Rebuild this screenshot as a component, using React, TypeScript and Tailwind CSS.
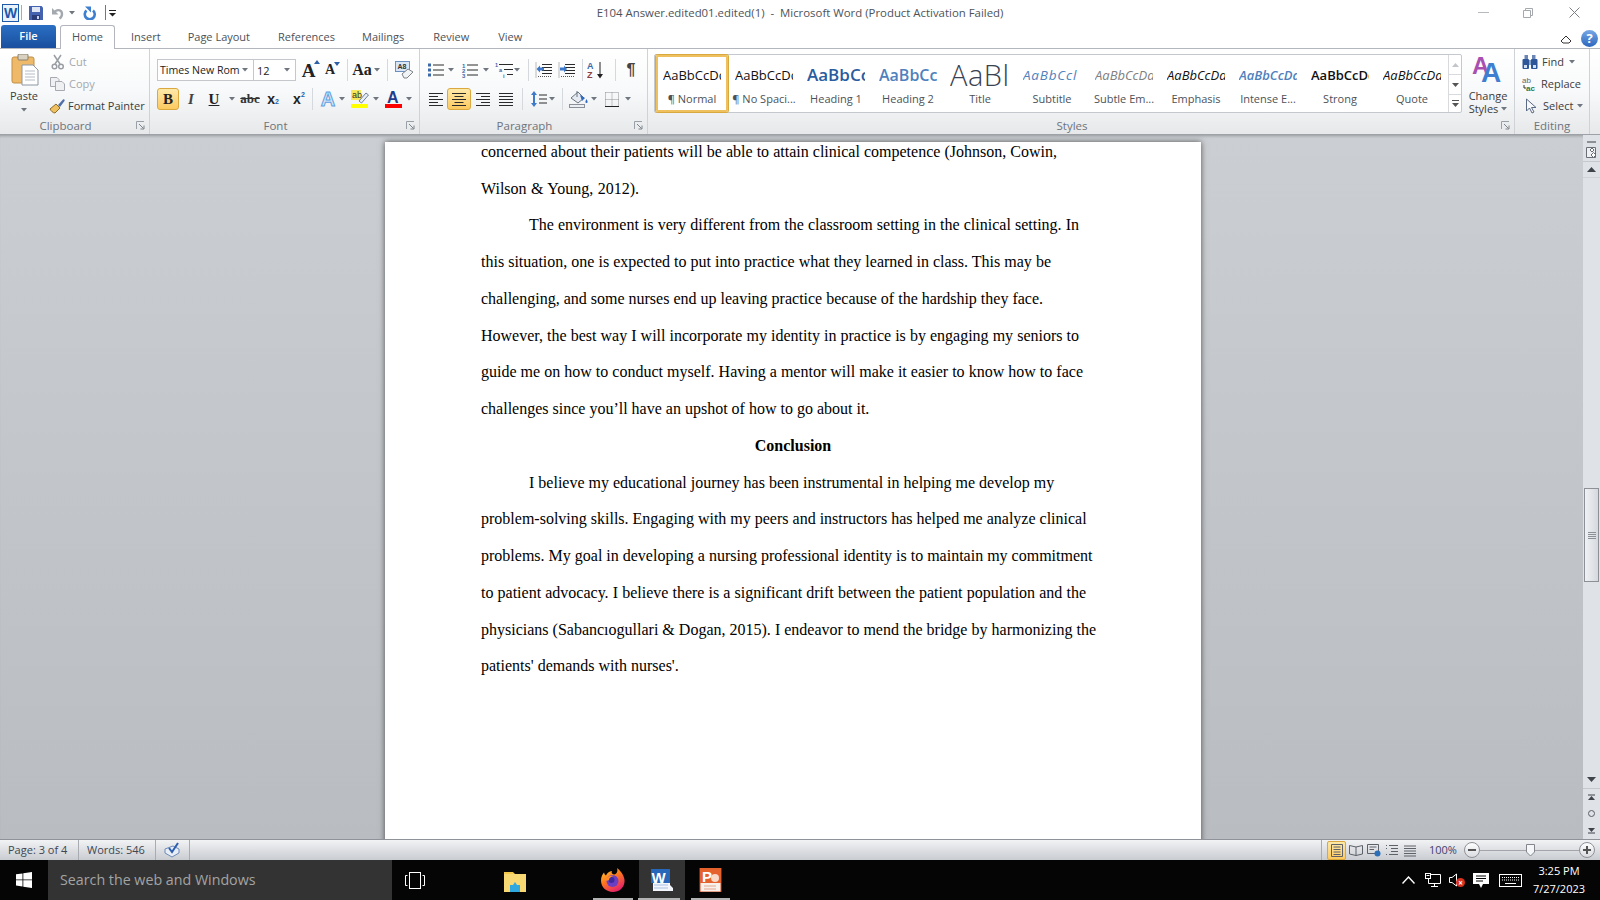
import type { ReactNode } from "react";

/* ── small shared bits ─────────────────── */

function Drop({ className = "" }: { className?: string }) {
    return (
        <svg width="6" height="4" viewBox="0 0 6 4" className={`shrink-0 ${className}`}>
            <path d="M0 0H6L3 3.5Z" fill="#6f7680" />
        </svg>
    );
}

function Sep({ className = "" }: { className?: string }) {
    return <div className={`w-px h-[22px] bg-[#d5d8dc] shrink-0 ${className}`} />;
}

function Launcher() {
    return (
        <div className="w-[18px] flex justify-center shrink-0">
            <svg width="9" height="9" viewBox="0 0 9 9" fill="none">
                <path d="M.5 8V.5H8" stroke="#9aa0a8" />
                <path d="M3 3L7.5 7.5M8 4.5V8H4.5" stroke="#7d838b" />
            </svg>
        </div>
    );
}

function Group({
    label,
    launcher = true,
    className,
    children,
}: {
    label: string;
    launcher?: boolean;
    className: string;
    children: ReactNode;
}) {
    return (
        <div className={`flex flex-col shrink-0 border-r border-[#cfd2d6] ${className}`}>
            <div className="h-[69px]">{children}</div>
            <div className="h-[15px] flex items-center text-[11.5px] text-[#6e747c]">
                <span className="flex-1 text-center">{label}</span>
                {launcher && <Launcher />}
            </div>
        </div>
    );
}

function Lines({ kind }: { kind: "left" | "center" | "right" | "justify" }) {
    const rows: Record<string, string[]> = {
        left: ["M1 2.5H15", "M1 5.5H10", "M1 8.5H15", "M1 11.5H10", "M1 14.5H15"],
        center: ["M1 2.5H15", "M3.5 5.5H12.5", "M1 8.5H15", "M3.5 11.5H12.5", "M1 14.5H15"],
        right: ["M1 2.5H15", "M6 5.5H15", "M1 8.5H15", "M6 11.5H15", "M1 14.5H15"],
        justify: ["M1 2.5H15", "M1 5.5H15", "M1 8.5H15", "M1 11.5H15", "M1 14.5H15"],
    };
    return (
        <svg width="16" height="16" viewBox="0 0 16 16" fill="none" stroke="#2a2a2a">
            {rows[kind].map((d) => (
                <path key={d} d={d} />
            ))}
        </svg>
    );
}

function Bullets({ kind }: { kind: "dot" | "num" | "multi" }) {
    return (
        <svg width="18" height="16" viewBox="0 0 18 16" fill="none">
            {kind === "dot" && (
                <g fill="#3a68a8">
                    <rect x="1" y="1.5" width="3" height="3" />
                    <rect x="1" y="6.5" width="3" height="3" />
                    <rect x="1" y="11.5" width="3" height="3" />
                </g>
            )}
            {kind === "num" && (
                <g fill="#3a68a8" fontSize="6" fontFamily="Liberation Sans" fontWeight="700">
                    <text x="1" y="5.5">1</text>
                    <text x="1" y="10.5">2</text>
                    <text x="1" y="15.5">3</text>
                </g>
            )}
            {kind === "multi" ? (
                <g>
                    <g fill="#3a68a8" fontSize="5.5" fontFamily="Liberation Sans" fontWeight="700">
                        <text x="0" y="5">1</text>
                        <text x="4" y="10">a</text>
                        <text x="8" y="15.5">i</text>
                    </g>
                    <path d="M4 2.5H18M9 7.5H18M12 12.5H18" stroke="#2a2a2a" />
                </g>
            ) : (
                <path d="M6 3H17M6 8H17M6 13H17" stroke="#2a2a2a" />
            )}
        </svg>
    );
}

function Indent({ inc }: { inc?: boolean }) {
    return (
        <svg width="18" height="16" viewBox="0 0 18 16" fill="none">
            <path d="M1 .5V15.5" stroke="#7a7a7a" strokeDasharray="1 1" />
            <path d="M7 2.5H17M7 5.5H17M7 8.5H17M7 11.5H17" stroke="#2a2a2a" />
            <path d="M3 14.5H17" stroke="#555" strokeDasharray="1 1" />
            {inc ? (
                <path d="M2 5.5H6V3.5L9 7L6 10.5V8.5H2Z" fill="#3f79c9" />
            ) : (
                <path d="M9 5.5H5V3.5L1.5 7L5 10.5V8.5H9Z" fill="#3f79c9" />
            )}
        </svg>
    );
}

/* ── title bar ─────────────────── */

function WordIcon() {
    return (
        <svg width="17" height="18" viewBox="0 0 17 18" className="shrink-0">
            <rect x=".5" y=".5" width="16" height="17" fill="#e9f1fb" stroke="#1d5aa8" />
            <text x="2" y="14" fontSize="14" fontWeight="700" fontFamily="Liberation Sans" fill="#1a58aa">W</text>
        </svg>
    );
}

function TitleBar() {
    return (
        <div className="h-[25px] flex items-center relative bg-white shrink-0">
            <div className="ml-[2px]">
                <WordIcon />
            </div>
            <div className="w-px h-[15px] bg-[#a8acb2] ml-[2px]" />
            <svg width="14" height="14" viewBox="0 0 14 14" className="ml-[7px]">
                <path d="M0 0H12.5L14 1.5V14H0Z" fill="#4462b0" />
                <rect x="3" y="1" width="8" height="5" fill="#dfe7f4" />
                <rect x="3" y="9" width="8" height="5" fill="#2b3c78" />
                <rect x="8" y="10" width="2" height="3" fill="#c9d2e8" />
            </svg>
            <svg width="14" height="14" viewBox="0 0 14 14" fill="none" className="ml-[8px]">
                <path d="M3 7C5 3 11 3 11 8C11 10 10 11.5 8.5 12.5" stroke="#a4a9b0" strokeWidth="2.4" />
                <path d="M1 2V8.5H7.5Z" fill="#a4a9b0" />
            </svg>
            <Drop className="ml-[4px]" />
            <svg width="14" height="14" viewBox="0 0 14 14" fill="none" className="ml-[8px]">
                <path d="M10 4.5A5 5 0 1 1 3.5 4.5" stroke="#3f7fd0" strokeWidth="2.6" />
                <path d="M2 .5H8V6.5Z" fill="#3f7fd0" />
            </svg>
            <div className="w-px h-[15px] bg-[#777] ml-[8px]" />
            <svg width="8" height="8" viewBox="0 0 8 8" className="ml-[3px]">
                <path d="M0 1.5H7" stroke="#222" />
                <path d="M0 4H7L3.5 7.5Z" fill="#222" />
            </svg>
            <div className="absolute left-0 right-0 top-[3px] text-center text-[11.4px] text-[#4d5359] leading-[20px]">
                E104 Answer.edited01.edited(1)&nbsp; -&nbsp; Microsoft Word (Product Activation Failed)
            </div>
            <div className="ml-auto flex items-center">
                <div className="w-[11px] h-px bg-[#b6b9bd] mr-[34px]" />
                <svg width="10" height="10" viewBox="0 0 10 10" fill="none" stroke="#a5a8ac" className="mr-[36px]">
                    <path d="M.5 2.5H7.5V9.5H.5ZM2.5 2.5V.5H9.5V7.5H7.5" />
                </svg>
                <svg width="11" height="11" viewBox="0 0 11 11" fill="none" stroke="#7d8186" className="mr-[20px]">
                    <path d="M.5.5L10.5 10.5M10.5.5L.5 10.5" />
                </svg>
            </div>
        </div>
    );
}

/* ── tabs ─────────────────── */

function Tabs() {
    return (
        <div className="h-[24px] flex items-end border-b border-[#b3b7bd] bg-white text-[11px] text-[#4c5258] shrink-0">
            <div className="w-[55px] h-[23px] ml-px rounded-t-[3px] bg-gradient-to-b from-[#2a6fc4] to-[#1a4f9e] text-white flex items-center justify-center font-semibold">
                File
            </div>
            <div className="w-[55px] h-[24px] ml-[4px] -mb-px bg-white border border-b-0 border-[#b3b7bd] rounded-t-[3px] flex items-center justify-center relative">
                Home
            </div>
            <span className="ml-[16px] mb-[3px]">Insert</span>
            <span className="ml-[27px] mb-[3px]">Page Layout</span>
            <span className="ml-[28px] mb-[3px]">References</span>
            <span className="ml-[27px] mb-[3px]">Mailings</span>
            <span className="ml-[29px] mb-[3px]">Review</span>
            <span className="ml-[29px] mb-[3px]">View</span>
            <div className="ml-auto mr-[2px] mb-[1px] flex items-center gap-[9px]">
                <svg width="12" height="10" viewBox="0 0 12 10" fill="none" stroke="#333">
                    <path d="M1 7L6 2L11 7L9 9H3Z" />
                </svg>
                <div className="w-[17px] h-[17px] rounded-full bg-gradient-to-b from-[#78a8e6] to-[#2b66bd] text-white text-[13px] font-bold flex items-center justify-center leading-none">
                    ?
                </div>
            </div>
        </div>
    );
}

/* ── ribbon ─────────────────── */

function Clipboard() {
    return (
        <Group label="Clipboard" className="w-[150px]">
            <div className="flex pt-[5px]">
                <div className="w-[48px] flex flex-col items-center">
                    <svg width="28" height="32" viewBox="0 0 28 32" className="ml-[2px]">
                        <rect x="1" y="3" width="22" height="26" rx="2" fill="#eeb969" stroke="#c08f48" />
                        <rect x="7" y="0" width="10" height="6" rx="1" fill="#d9d2c2" stroke="#8a806c" />
                        <path d="M11 11H22L27 16V31H11Z" fill="#fff" stroke="#8d96a3" />
                        <path d="M14 17H24M14 20H24M14 23H24M14 26H24" stroke="#b5bbc4" />
                    </svg>
                    <span className="text-[11px] text-[#3c3c3c] leading-[14px] mt-[3px]">Paste</span>
                    <Drop className="mt-[5px]" />
                </div>
                <div className="flex flex-col text-[11px] leading-[22px] ml-[1px] -mt-[3px] whitespace-nowrap">
                    <div className="flex items-center h-[22px] text-[#a4a8ad]">
                        <svg width="14" height="16" viewBox="0 0 14 16" fill="none" stroke="#9a9ea4" className="ml-[2px] mr-[4px]">
                            <path d="M3 1L9 10M10 1L4 10" strokeWidth="1.5" />
                            <circle cx="3.5" cy="12.5" r="2.3" strokeWidth="1.5" />
                            <circle cx="10" cy="12.5" r="2.3" strokeWidth="1.5" />
                        </svg>
                        Cut
                    </div>
                    <div className="flex items-center h-[22px] text-[#a4a8ad]">
                        <svg width="15" height="14" viewBox="0 0 15 14" fill="#eef0f2" stroke="#a6aab0" className="ml-[1px] mr-[4px]">
                            <path d="M.5.5H7L9 2.5V9.5H.5Z" />
                            <path d="M5.5 4.5H12L14.5 7V13.5H5.5Z" />
                        </svg>
                        Copy
                    </div>
                    <div className="flex items-center h-[22px] text-[#3c3c3c]">
                        <svg width="17" height="16" viewBox="0 0 17 16" className="mr-[2px]">
                            <path d="M1 11L7 6L11 10L6 15C4 15 2 13 1 11Z" fill="#eec05f" stroke="#8d6d2b" />
                            <path d="M9 7L14 1.5C15 .8 16.2 2 15.5 3L11 9Z" fill="#4f6fa8" />
                        </svg>
                        Format Painter
                    </div>
                </div>
            </div>
        </Group>
    );
}

function Tool({ className, children }: { className: string; children: ReactNode }) {
    return <div className={`h-[22px] flex items-center justify-center shrink-0 ${className}`}>{children}</div>;
}

function BigA({ small, up }: { small?: boolean; up: boolean }) {
    return (
        <span className={`relative font-['Liberation_Serif'] font-bold text-[#222] leading-none ${small ? "text-[14px]" : "text-[19px]"}`}>
            A
            <svg width="6" height="4" viewBox="0 0 6 4" className="absolute -top-[1px] -right-[5px]">
                <path d={up ? "M0 4H6L3 0Z" : "M0 0H6L3 4Z"} fill="#2d5fa6" />
            </svg>
        </span>
    );
}

function Font() {
    const combo = "h-[22px] border border-[#c4c7cc] bg-white flex items-center text-[11px] text-[#222] leading-none shrink-0";
    return (
        <Group label="Font" className="w-[270px]">
            <div className="pt-[10px] pl-[7px] flex flex-col gap-[7px]">
                <div className="flex items-center">
                    <div className={`${combo} w-[97px] pl-[2px] whitespace-nowrap overflow-hidden`}>
                        <span className="flex-1 text-[10.6px]">Times New Rom</span>
                        <Drop className="mr-[5px]" />
                    </div>
                    <div className={`${combo} w-[43px] -ml-px pl-[3px]`}>
                        <span className="flex-1">12</span>
                        <Drop className="mr-[5px]" />
                    </div>
                    <Tool className="w-[25px]">
                        <BigA up />
                    </Tool>
                    <Tool className="w-[18px]">
                        <BigA small up={false} />
                    </Tool>
                    <Sep className="ml-[8px]" />
                    <Tool className="w-[24px] ml-[2px] font-['Liberation_Serif'] font-bold text-[16px] text-[#222]">Aa</Tool>
                    <Drop />
                    <Sep className="ml-[7px]" />
                    <Tool className="w-[32px]">
                        <svg width="19" height="18" viewBox="0 0 19 18">
                            <rect x=".5" y=".5" width="14" height="10" fill="#dbe6f5" stroke="#6b8fbe" />
                            <text x="2.5" y="8" fontSize="7" fontFamily="Liberation Sans" fontWeight="700" fill="#333">A8</text>
                            <path d="M7 13L13 8L18 11L12 17H9Z" fill="#f2f3f5" stroke="#7c828a" />
                        </svg>
                    </Tool>
                </div>
                <div className="flex items-center">
                    <Tool className="w-[22px] rounded-[3px] border border-[#d9a83f] bg-gradient-to-b from-[#fde9a8] to-[#fcc95f] font-['Liberation_Serif'] font-bold text-[15px] text-[#222]">
                        B
                    </Tool>
                    <Tool className="w-[24px] font-['Liberation_Serif'] italic font-bold text-[15px] text-[#444]">I</Tool>
                    <Tool className="w-[22px] font-['Liberation_Serif'] font-bold text-[15px] text-[#222] underline">U</Tool>
                    <Tool className="w-[14px]">
                        <Drop />
                    </Tool>
                    <Tool className="w-[22px] font-['Liberation_Serif'] font-bold text-[13px] text-[#333] line-through">abc</Tool>
                    <Tool className="w-[24px]">
                        <span className="font-['Liberation_Sans'] font-bold text-[14px] text-[#222] leading-none">
                            x<span className="text-[7px] text-[#2d5fa6]">2</span>
                        </span>
                    </Tool>
                    <Tool className="w-[24px]">
                        <span className="font-['Liberation_Sans'] font-bold text-[14px] text-[#222] leading-none relative">
                            x<span className="text-[7px] text-[#2d5fa6] absolute -top-[1px]">2</span>
                        </span>
                    </Tool>
                    <Sep className="ml-[3px]" />
                    <Tool className="w-[22px] ml-[4px]">
                        <span className="font-['Liberation_Sans'] font-bold text-[20px] text-[#cfe6fb] [-webkit-text-stroke:1px_#5f9fe0] leading-none">A</span>
                    </Tool>
                    <Drop />
                    <Tool className="w-[24px] ml-[3px]">
                        <svg width="18" height="20" viewBox="0 0 18 20">
                            <rect x="0" y="1" width="10" height="10" fill="#f6e85a" />
                            <text x="1" y="9" fontSize="9" fontFamily="Liberation Sans" fill="#333">ab</text>
                            <path d="M8 12L15 4L17.5 6L10.5 14Z" fill="#e8eef7" stroke="#6f7f98" />
                            <rect x="0" y="15" width="17" height="4" fill="#ffff00" />
                        </svg>
                    </Tool>
                    <Drop className="ml-px" />
                    <Tool className="w-[22px] ml-[3px]">
                        <svg width="17" height="20" viewBox="0 0 17 20">
                            <text x="2" y="14" fontSize="16" fontWeight="700" fontFamily="Liberation Sans" fill="#1f3d8a">A</text>
                            <rect x="0" y="15" width="17" height="4" fill="#ff0000" />
                        </svg>
                    </Tool>
                    <Drop className="ml-[2px]" />
                </div>
            </div>
        </Group>
    );
}

function Paragraph() {
    return (
        <Group label="Paragraph" className="w-[228px]">
            <div className="pt-[10px] flex flex-col gap-[7px]">
                <div className="flex items-center">
                    <Tool className="w-[22px] ml-[5px]">
                        <Bullets kind="dot" />
                    </Tool>
                    <Drop className="ml-px" />
                    <Tool className="w-[22px] ml-[5px]">
                        <Bullets kind="num" />
                    </Tool>
                    <Drop className="ml-[2px]" />
                    <Tool className="w-[20px] ml-[5px]">
                        <Bullets kind="multi" />
                    </Tool>
                    <Drop />
                    <Sep className="ml-[8px]" />
                    <Tool className="w-[20px] ml-[5px]">
                        <Indent />
                    </Tool>
                    <Tool className="w-[20px] ml-[3px]">
                        <Indent inc />
                    </Tool>
                    <Sep className="ml-[5px]" />
                    <Tool className="w-[20px] ml-[3px]">
                        <svg width="18" height="18" viewBox="0 0 18 18" fill="none">
                            <text x="0" y="8" fontSize="9" fontWeight="700" fontFamily="Liberation Sans" fill="#3a68a8">A</text>
                            <text x="0" y="17" fontSize="9" fontWeight="700" fontFamily="Liberation Sans" fill="#8c3f3f">Z</text>
                            <path d="M13 1V16" stroke="#222" />
                            <path d="M10 13H16L13 17.5Z" fill="#222" />
                        </svg>
                    </Tool>
                    <Sep className="ml-[9px]" />
                    <Tool className="w-[20px] ml-[5px] font-['Liberation_Sans'] font-bold text-[16px] text-[#444]">¶</Tool>
                </div>
                <div className="flex items-center">
                    <Tool className="w-[22px] ml-[5px]">
                        <Lines kind="left" />
                    </Tool>
                    <Tool className="w-[24px] rounded-[3px] border border-[#d9a83f] bg-gradient-to-b from-[#fde9a8] to-[#fcc95f]">
                        <Lines kind="center" />
                    </Tool>
                    <Tool className="w-[24px]">
                        <Lines kind="right" />
                    </Tool>
                    <Tool className="w-[22px]">
                        <Lines kind="justify" />
                    </Tool>
                    <Sep className="ml-[5px]" />
                    <Tool className="w-[20px] ml-[6px]">
                        <svg width="16" height="16" viewBox="0 0 16 16" fill="none">
                            <path d="M3 0L6 4H0ZM3 16L6 12H0Z" fill="#3f79c9" />
                            <path d="M3 3V13" stroke="#3f79c9" strokeWidth="2" />
                            <path d="M8 4H16M8 8H16M8 12H16" stroke="#2a2a2a" />
                        </svg>
                    </Tool>
                    <Drop />
                    <Sep className="ml-[7px]" />
                    <Tool className="w-[22px] ml-[5px]">
                        <svg width="20" height="18" viewBox="0 0 20 18" fill="none">
                            <path d="M2 8L9 2L15 8L9 13Z" fill="#e6ebf2" stroke="#6b7480" />
                            <path d="M8 1L8 7" stroke="#6b7480" />
                            <path d="M11 5L16 8L13 11Z" fill="#2f69c0" />
                            <path d="M17.5 9C19 11.5 19 13 17.5 13C16 13 16 11.5 17.5 9Z" fill="#2f69c0" />
                            <rect x=".5" y="14.5" width="15" height="3" fill="#eceef1" stroke="#8a9099" />
                        </svg>
                    </Tool>
                    <Drop className="ml-px" />
                    <Tool className="w-[20px] ml-[5px]">
                        <svg width="14" height="15" viewBox="0 0 14 15" fill="none">
                            <path d="M.5.5H13.5V14M.5.5V14M7 .5V14M.5 7.5H13.5" stroke="#8b8f95" strokeDasharray="1 1" />
                            <path d="M0 14.5H14" stroke="#222" />
                        </svg>
                    </Tool>
                    <Drop className="ml-[3px]" />
                </div>
            </div>
        </Group>
    );
}

const GALLERY = [
    { label: "¶ Normal", sample: "AaBbCcDd", cls: "text-[13px] text-[#111] w-[58px]", active: true },
    { label: "¶ No Spaci...", sample: "AaBbCcDd", cls: "text-[13px] text-[#111] w-[58px]" },
    { label: "Heading 1", sample: "AaBbCc", cls: "text-[17px] font-semibold text-[#2a5c9e] w-[58px]" },
    { label: "Heading 2", sample: "AaBbCc", cls: "text-[16px] font-semibold text-[#4f81bd] w-[58px]" },
    { label: "Title", sample: "AaBl", cls: "text-[29px] font-light text-[#3a4250] w-[60px] tracking-[0.5px]" },
    { label: "Subtitle", sample: "AaBbCcl", cls: "text-[13.5px] italic text-[#4f81bd] w-[58px] tracking-[0.8px]" },
    { label: "Subtle Em...", sample: "AaBbCcDd", cls: "text-[13px] italic text-[#808080] w-[58px]" },
    { label: "Emphasis", sample: "AaBbCcDd", cls: "text-[13px] italic text-[#111] w-[58px]" },
    { label: "Intense E...", sample: "AaBbCcDd", cls: "text-[13px] italic font-semibold text-[#4f81bd] w-[58px]" },
    { label: "Strong", sample: "AaBbCcDd", cls: "text-[13px] font-semibold text-[#111] w-[58px]" },
    { label: "Quote", sample: "AaBbCcDd", cls: "text-[13px] italic text-[#111] w-[58px]" },
];

function Styles() {
    return (
        <Group label="Styles" className="w-[867px]">
            <div className="flex pt-[5px] pl-[6px]">
                <div className="w-[808px] h-[59px] border border-[#c5c8cd] rounded-[2px] bg-white flex">
                    <div className="flex w-[794px] pl-px">
                        {GALLERY.map((g) => (
                            <div
                                key={g.label}
                                className={`w-[72px] h-[57px] shrink-0 flex flex-col items-center ${
                                    g.active ? "border-2 border-[#efc15e] rounded-[2px] shadow-[0_0_0_1px_#d9a83f]" : "border-2 border-transparent"
                                }`}
                            >
                                <div className="h-[36px] flex items-center justify-center">
                                    <div className={`overflow-hidden whitespace-nowrap leading-[36px] h-[36px] ${g.cls}`}>{g.sample}</div>
                                </div>
                                <div className="text-[11px] text-[#4c5258] leading-[16px] whitespace-nowrap -mt-[2px]">{g.label}</div>
                            </div>
                        ))}
                    </div>
                    <div className="w-[13px] flex flex-col border-l border-[#d8dade] ml-auto">
                        <div className="h-[20px] flex items-center justify-center border-b border-[#d8dade]">
                            <svg width="7" height="4" viewBox="0 0 7 4"><path d="M0 4H7L3.5 0Z" fill="#c2c5ca" /></svg>
                        </div>
                        <div className="h-[20px] flex items-center justify-center border-b border-[#d8dade]">
                            <svg width="7" height="4" viewBox="0 0 7 4"><path d="M0 0H7L3.5 4Z" fill="#555" /></svg>
                        </div>
                        <div className="flex-1 flex items-center justify-center">
                            <svg width="7" height="7" viewBox="0 0 7 7"><path d="M0 .5H7" stroke="#555" /><path d="M0 3H7L3.5 7Z" fill="#555" /></svg>
                        </div>
                    </div>
                </div>
                <div className="w-[52px] flex flex-col items-center">
                    <svg width="32" height="30" viewBox="0 0 32 30" className="-mt-[1px]">
                        <text x="0" y="21" fontSize="24" fontWeight="700" fontFamily="Liberation Sans" fill="#a94fb0">A</text>
                        <text x="9" y="29" fontSize="28" fontWeight="700" fontFamily="Liberation Sans" fill="#3f7fd0">A</text>
                    </svg>
                    <div className="text-[11px] text-[#3c3c3c] leading-[13px] text-center mt-[6px]">
                        Change
                        <div className="flex items-center justify-center gap-[3px]">
                            Styles <Drop />
                        </div>
                    </div>
                </div>
            </div>
        </Group>
    );
}

function Editing() {
    return (
        <Group label="Editing" launcher={false} className="w-[75px]">
            <div className="pt-[2px] pl-[7px] flex flex-col text-[11px] text-[#3c3c3c]">
                <div className="h-[22px] flex items-center">
                    <svg width="16" height="15" viewBox="0 0 16 15" className="mr-[4px]">
                        <rect x="2.5" y="0" width="3.5" height="4" fill="#6b86b5" />
                        <rect x="10" y="0" width="3.5" height="4" fill="#6b86b5" />
                        <rect x="0.5" y="4" width="6.5" height="10" rx="1" fill="#2c5697" />
                        <rect x="9" y="4" width="6.5" height="10" rx="1" fill="#2c5697" />
                        <rect x="7" y="5" width="2" height="5" fill="#8aa3c9" />
                        <rect x="2" y="10" width="3" height="3" fill="#cfe0f5" />
                        <rect x="11" y="10" width="3" height="3" fill="#cfe0f5" />
                    </svg>
                    Find
                    <Drop className="ml-[5px]" />
                </div>
                <div className="h-[22px] flex items-center">
                    <svg width="16" height="16" viewBox="0 0 16 16" className="mr-[3px]">
                        <text x="0" y="7" fontSize="8" fontFamily="Liberation Sans" fill="#666">ab</text>
                        <text x="4" y="15" fontSize="8" fontWeight="700" fontFamily="Liberation Sans" fill="#1f7a4a">ac</text>
                        <path d="M2 9V12H4" stroke="#333" fill="none" />
                    </svg>
                    Replace
                </div>
                <div className="h-[22px] flex items-center">
                    <svg width="13" height="16" viewBox="0 0 13 16" className="ml-[3px] mr-[5px]">
                        <path d="M1.5 1V13L4.5 10L7 15L9 14L6.5 9.5H11Z" fill="#f6f8fb" stroke="#5a6a85" />
                    </svg>
                    Select
                    <Drop className="ml-[4px]" />
                </div>
            </div>
        </Group>
    );
}

function Ribbon() {
    return (
        <div className="h-[86px] flex shrink-0 bg-gradient-to-b from-white via-[#f8f9fa] to-[#e6e8ea] border-b border-[#9ea2a8]">
            <Clipboard />
            <Font />
            <Paragraph />
            <Styles />
            <Editing />
        </div>
    );
}

/* ── document ─────────────────── */

const DOC: { text: string; w: number; indent?: boolean; bold?: boolean }[] = [
    { text: "concerned about their patients will be able to attain clinical competence (Johnson, Cowin,", w: 576 },
    { text: "Wilson & Young, 2012).", w: 158 },
    { text: "The environment is very different from the classroom setting in the clinical setting. In", w: 550, indent: true },
    { text: "this situation, one is expected to put into practice what they learned in class. This may be", w: 570 },
    { text: "challenging, and some nurses end up leaving practice because of the hardship they face.", w: 562 },
    { text: "However, the best way I will incorporate my identity in practice is by engaging my seniors to", w: 598 },
    { text: "guide me on how to conduct myself. Having a mentor will make it easier to know how to face", w: 602 },
    { text: "challenges since you’ll have an upshot of how to go about it.", w: 388 },
    { text: "Conclusion", w: 0, bold: true },
    { text: "I believe my educational journey has been instrumental in helping me develop my", w: 525, indent: true },
    { text: "problem-solving skills. Engaging with my peers and instructors has helped me analyze clinical", w: 604 },
    { text: "problems. My goal in developing a nursing professional identity is to maintain my commitment", w: 611 },
    { text: "to patient advocacy. I believe there is a significant drift between the patient population and the", w: 605 },
    { text: "physicians (Sabancıogullari & Dogan, 2015). I endeavor to mend the bridge by harmonizing the", w: 615 },
    { text: "patients' demands with nurses'.", w: 197 },
];

function Page() {
    return (
        <div className="w-[816px] ml-[385px] mt-[7px] flow-root bg-white shadow-[0_0_6px_rgba(0,0,0,0.6)] font-['Liberation_Serif'] text-[16px] leading-[36.73px] text-black">
            <div className="-mt-[8px] pl-[96px]">
                {DOC.map((line) =>
                    line.bold ? (
                        <div key={line.text} className="font-bold text-center -ml-[96px]">
                            {line.text}
                        </div>
                    ) : (
                        <div
                            key={line.text}
                            className={`whitespace-nowrap text-justify [text-align-last:justify] ${line.indent ? "ml-[48px]" : ""}`}
                            style={{ width: line.w }}
                        >
                            {line.text}
                        </div>
                    ),
                )}
            </div>
            <div className="h-[300px]" />
        </div>
    );
}

function Scrollbar() {
    const btn = "flex items-center justify-center shrink-0";
    return (
        <div className="w-[17px] flex flex-col bg-[#dfe2e7] shrink-0 overflow-hidden">
            <div className="h-[9px] flex items-end justify-center shrink-0">
                <div className="w-[9px] h-[2px] bg-[#8d9197] mb-[1px]" />
            </div>
            <div className={`${btn} h-[18px] border-b border-[#c5c8cd]`}>
                <svg width="11" height="12" viewBox="0 0 11 12" fill="#eef0f3" stroke="#6a6f76">
                    <path d="M.5.5H9.5V10.5H.5Z" />
                    <path d="M4 3L6 1L8 3L6 5ZM5 8L7.5 5.5L10 8L7.5 10.5Z" fill="#fff" />
                </svg>
            </div>
            <div className={`${btn} h-[16px] border-b border-[#d1d4d8]`}>
                <svg width="9" height="5" viewBox="0 0 9 5"><path d="M0 5H9L4.5 0Z" fill="#3f434a" /></svg>
            </div>
            <div className="flex-1 min-h-0">
                <div className="mt-[310px] h-[94px] mx-px w-[15px] border border-[#8d9197] bg-gradient-to-r from-[#f0f2f5] to-[#d5d8dd] flex flex-col items-center justify-center gap-px">
                    <div className="w-[8px] h-px bg-[#8d9197]" />
                    <div className="w-[8px] h-px bg-[#8d9197]" />
                    <div className="w-[8px] h-px bg-[#8d9197]" />
                    <div className="w-[8px] h-px bg-[#8d9197]" />
                </div>
            </div>
            <div className={`${btn} h-[18px] border-b border-[#c5c8cd]`}>
                <svg width="9" height="5" viewBox="0 0 9 5"><path d="M0 0H9L4.5 5Z" fill="#3f434a" /></svg>
            </div>
            <div className={`${btn} h-[16px]`}>
                <svg width="7" height="7" viewBox="0 0 7 7"><path d="M0 1H7" stroke="#3f434a" /><path d="M0 6H7L3.5 2Z" fill="#3f434a" /></svg>
            </div>
            <div className={`${btn} h-[17px]`}>
                <div className="w-[7px] h-[7px] rounded-full border border-[#5a5f66]" />
            </div>
            <div className={`${btn} h-[17px]`}>
                <svg width="7" height="7" viewBox="0 0 7 7"><path d="M0 6H7" stroke="#3f434a" /><path d="M0 1H7L3.5 5Z" fill="#3f434a" /></svg>
            </div>
        </div>
    );
}

/* ── status bar ─────────────────── */

function ViewIcon({ d, extra }: { d: string; extra?: ReactNode }) {
    return (
        <svg width="14" height="13" viewBox="0 0 14 13" fill="none" stroke="#5d6168">
            <path d={d} />
            {extra}
        </svg>
    );
}

function StatusBar() {
    const divider = "w-px h-[20px] bg-[#a8acb2] shrink-0";
    return (
        <div className="h-[21px] flex items-center shrink-0 border-t border-[#8f9399] bg-gradient-to-b from-[#f2f3f5] to-[#c9ccd1] text-[11px] text-[#3e4752]">
            <span className="ml-[8px] w-[70px]">Page: 3 of 4</span>
            <div className={divider} />
            <span className="ml-[8px] w-[68px]">Words: 546</span>
            <div className={divider} />
            <div className="w-[33px] flex justify-center">
                <svg width="17" height="16" viewBox="0 0 17 16" fill="none">
                    <path d="M1 7L9 4L15 7V11L8 15L1 11Z" fill="#e9eef6" stroke="#6b8ab8" />
                    <path d="M5 6L8 10L14 1" stroke="#2c5fb0" strokeWidth="2" />
                </svg>
            </div>
            <div className={divider} />
            <div className={`${divider} ml-auto`} />
            <div className="ml-[5px] w-[19px] h-[19px] rounded-[2px] border border-[#d9a83f] bg-gradient-to-b from-[#fde9a8] to-[#fcc95f] flex items-center justify-center">
                <ViewIcon d="M1.5.5H12.5V12.5H1.5ZM3.5 3H10.5M3.5 5.5H10.5M3.5 8H10.5M3.5 10.5H10.5" />
            </div>
            <div className="ml-[1px] w-[18px] flex justify-center">
                <ViewIcon d="M.5 1.5L7 3L13.5 1.5V10L7 11.5L.5 10ZM7 3V11.5" />
            </div>
            <div className="w-[18px] flex justify-center">
                <ViewIcon d="M.5.5H11.5V9.5H.5ZM2.5 3H9.5M2.5 5.5H7" extra={<circle cx="10.5" cy="9.5" r="3" fill="#2b6fb8" stroke="none" />} />
            </div>
            <div className="w-[17px] flex justify-center">
                <ViewIcon d="M4 1.5H13M6 4.5H13M6 7.5H13M4 10.5H13M1 1.5H2M1 4.5H2M1 10.5H2" />
            </div>
            <div className="ml-[1px] w-[18px] flex justify-center">
                <ViewIcon d="M1 2H13M1 4.5H13M1 7H13M1 9.5H13M1 12H13" />
            </div>
            <span className="ml-[10px] w-[28px] text-[#3f3f70]">100%</span>
            <div className="ml-[7px] w-[16px] h-[16px] rounded-full border border-[#8d9197] bg-gradient-to-b from-white to-[#d9dbdf] flex items-center justify-center shrink-0">
                <div className="w-[8px] h-[2px] bg-[#555]" />
            </div>
            <div className="w-[99px] flex items-center relative">
                <div className="w-full h-px bg-[#a2a6ac]" />
                <svg width="9" height="13" viewBox="0 0 9 13" className="absolute left-[46px] -top-[6px]">
                    <path d="M.5.5H8.5V8L4.5 12L.5 8Z" fill="#f5f6f8" stroke="#82868c" />
                </svg>
            </div>
            <div className="w-[16px] h-[16px] rounded-full border border-[#8d9197] bg-gradient-to-b from-white to-[#d9dbdf] flex items-center justify-center shrink-0 relative mr-[5px]">
                <div className="w-[8px] h-[2px] bg-[#555]" />
                <div className="w-[2px] h-[8px] bg-[#555] absolute" />
            </div>
        </div>
    );
}

/* ── taskbar ─────────────────── */

function Taskbar() {
    return (
        <div className="h-[40px] flex items-center shrink-0 bg-[#050505] text-white relative">
            <div className="w-[48px] flex justify-center shrink-0">
                <svg width="16" height="16" viewBox="0 0 16 16" fill="#fff">
                    <path d="M0 2.3L6.5 1.4V7.5H0ZM7.3 1.3L16 0V7.5H7.3ZM0 8.3H6.5V14.5L0 13.6ZM7.3 8.3H16V16L7.3 14.7Z" />
                </svg>
            </div>
            <div className="w-[344px] h-full bg-[#333333] flex items-center pl-[12px] text-[14.25px] text-[#a3a3a3] shrink-0">
                Search the web and Windows
            </div>
            <svg width="20" height="17" viewBox="0 0 20 17" fill="none" stroke="#fff" className="ml-[13px] shrink-0">
                <rect x="4.5" y=".5" width="11" height="16" />
                <path d="M2.5 3.5H.5V13.5H2.5M17.5 3.5H19.5V13.5H17.5" />
            </svg>
            <svg width="22" height="23" viewBox="0 0 22 23" className="ml-[79px] shrink-0">
                <path d="M0 3H9L11 5H21V12H0Z" fill="#f2c74a" />
                <rect x="0" y="5" width="22" height="18" fill="#f7d873" />
                <path d="M6 23V16H9L11 13L13 16H16V23Z" fill="#2fa8e0" />
            </svg>
            <svg width="24" height="24" viewBox="0 0 24 24" className="ml-[75px] shrink-0">
                <defs>
                    <linearGradient id="fx" x1="0" y1="0" x2="0.6" y2="1">
                        <stop offset="0" stopColor="#ffd23f" />
                        <stop offset="0.5" stopColor="#ff7a1a" />
                        <stop offset="1" stopColor="#e6246a" />
                    </linearGradient>
                </defs>
                <path d="M16 0C22 5 24 10 23.5 14C23 20 18 24 12 24C5 24 0 19 0 12.5C0 9 1.5 6 3 4.5C3.5 6 4 7 5 7.5C6 5 8 3.5 11 3C10 5 11 6 13 6.5C16 6 17 3 16 0Z" fill="url(#fx)" />
                <circle cx="11.5" cy="13" r="6" fill="#6a3fc4" />
                <circle cx="10.5" cy="12" r="3" fill="#3d2a9c" />
                <path d="M4 12C6 8 10 7 13 8C10 8.5 8 10 8 12C7 13 5 13 4 12Z" fill="#ff8a2a" />
            </svg>
            <div className="ml-[14px] w-[46px] h-full bg-[#333333] flex items-center justify-center shrink-0">
                <svg width="24" height="24" viewBox="0 0 24 24">
                    <path d="M3 1H20V17L23 20V23H3Z" fill="#f3f6fa" />
                    <path d="M1 1H20V15H1Z" fill="#2767ba" />
                    <text x="1.5" y="14.5" fontSize="15" fontWeight="700" fontFamily="Liberation Sans" fill="#fff">W</text>
                    <path d="M4 17H18M4 20H18" stroke="#a9c2e4" />
                </svg>
            </div>
            <svg width="24" height="24" viewBox="0 0 24 24" className="ml-[14px] shrink-0">
                <rect x="1" y="0" width="21" height="24" fill="#f7f1ec" stroke="#d24a20" />
                <rect x="1" y="0" width="21" height="15" fill="#e6622c" />
                <text x="3" y="14" fontSize="15" fontWeight="700" fontFamily="Liberation Sans" fill="#fff">P</text>
                <circle cx="16" cy="10" r="4" fill="#f9d9c8" />
                <path d="M5 18H17M5 21H17" stroke="#e5a58d" />
            </svg>
            <div className="ml-auto flex items-center shrink-0">
                <svg width="13" height="8" viewBox="0 0 13 8" fill="none" stroke="#fff" strokeWidth="1.4" className="mr-[10px]">
                    <path d="M.5 7.5L6.5 1L12.5 7.5" />
                </svg>
                <svg width="16" height="14" viewBox="0 0 16 14" fill="none" stroke="#fff" className="mr-[8px]">
                    <path d="M3.5 1.5H15.5V10.5H3.5ZM9.5 10.5V13.5M6 13.5H13" />
                    <rect x=".5" y=".5" width="5" height="5" fill="#050505" />
                    <path d="M1.5 2.5H4.5" />
                </svg>
                <div className="relative w-[16px] h-[14px] mr-[8px]">
                    <svg width="9" height="14" viewBox="0 0 9 14" fill="none" stroke="#fff">
                        <path d="M.5 4.5H3L7.5 1V13L3 9.5H.5Z" />
                    </svg>
                    <div className="absolute left-[7px] top-[5px] w-[9px] h-[9px] rounded-full bg-[#d9321f] flex items-center justify-center text-[8px] leading-none font-bold">
                        ×
                    </div>
                </div>
                <svg width="16" height="15" viewBox="0 0 16 15" className="mr-[10px]">
                    <path d="M0 0H16V11H10L8 15L6 11H0Z" fill="#fff" />
                    <path d="M3 3H13M3 5.5H13M3 8H10" stroke="#050505" />
                </svg>
                <svg width="23" height="13" viewBox="0 0 23 13" fill="none" stroke="#fff" className="mr-[7px]">
                    <rect x=".5" y=".5" width="22" height="12" />
                    <path d="M3 3.5H20M3 6H20" strokeDasharray="1 1" />
                    <path d="M6 9.5H17" />
                </svg>
                <div className="w-[60px] text-center text-[11px] leading-[18px] mr-[11px] whitespace-nowrap">
                    <div>3:25 PM</div>
                    <div>7/27/2023</div>
                </div>
            </div>
            {/* running app markers */}
            <div className="absolute left-[593px] bottom-0 w-[40px] h-[2px] bg-[#b3b3b3]" />
            <div className="absolute left-[638px] bottom-0 w-[42px] h-[2px] bg-[#b3b3b3]" />
            <div className="absolute left-[691px] bottom-0 w-[39px] h-[2px] bg-[#b3b3b3]" />
        </div>
    );
}

export default function App() {
    return (
        <div className="w-[1600px] h-[900px] overflow-hidden flex flex-col bg-white font-['Open_Sans','Noto_Sans',sans-serif]">
            <TitleBar />
            <Tabs />
            <Ribbon />
            <div className="flex-1 min-h-0 flex bg-gradient-to-b from-[#cbced2] to-[#b9bcc0] shadow-[inset_0_3px_3px_-2px_rgba(0,0,0,0.25)]">
                <div className="flex-1 min-w-0 overflow-hidden">
                    <Page />
                </div>
                <Scrollbar />
            </div>
            <StatusBar />
            <Taskbar />
        </div>
    );
}
